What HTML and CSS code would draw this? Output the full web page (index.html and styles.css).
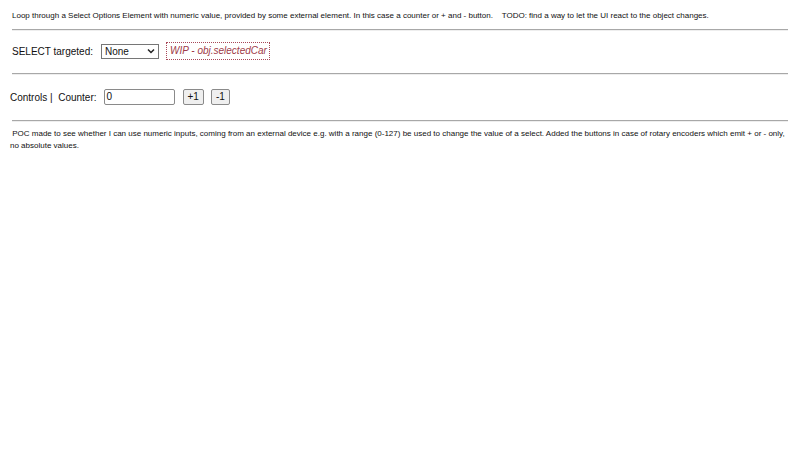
FILE: index.html
```html
<!DOCTYPE html>
<html>
<head>
<meta charset="utf-8">
<link rel="stylesheet" href="styles.css">
</head>
<body>
<div class="page">
  <p class="intro">Loop through a Select Options Element with numeric value, provided by some external element. In this case a counter or + and - button. &nbsp;&nbsp; TODO: find a way to let the UI react to the object changes.</p>
  <hr class="rule">
  <div class="row select-row">
    <span class="label">SELECT targeted:</span>
    <div class="select-box"><span class="select-val">None</span><svg class="chev" width="8" height="6" viewBox="0 0 8 6"><path d="M1 1.5 L4 4.5 L7 1.5" fill="none" stroke="#222" stroke-width="1.5"/></svg></div>
    <span class="wip">WIP - obj.selectedCar</span>
  </div>
  <hr class="rule">
  <div class="row controls-row">
    <span class="label">Controls | &nbsp;Counter:</span>
    <div class="num-input">0</div>
    <button class="btn">+1</button>
    <button class="btn">-1</button>
  </div>
  <hr class="rule">
  <p class="outro">&nbsp;POC made to see whether I can use numeric inputs, coming from an external device e.g. with a range (0-127) be used to change the value of a select. Added the buttons in case of rotary encoders which emit + or - only, no absolute values.</p>
</div>
</body>
</html>
```
FILE: styles.css
```css
html, body {
  margin: 0;
  padding: 0;
  background: #fff;
}
.page {
  padding: 0 12px 0 10px;
  font-family: "Liberation Sans", Arial, sans-serif;
  color: #111;
}
.intro {
  margin: 0;
  padding: 11px 0 8px 2px;
  font-size: 8px;
  line-height: 10px;
}
.rule {
  margin: 0 0 0 2px;
  border: 0;
  border-top: 1px solid #a8a8a8;
  border-bottom: 1px solid #eeeeee;
  height: 0;
}
.row {
  display: flex;
  align-items: center;
}
.select-row {
  padding: 11px 0 13px 2px;
  height: 18px;
}
.select-row .label {
  font-size: 10px;
  margin-right: 8px;
}
.select-box {
  height: 13px;
  border: 1px solid #767676;
  display: flex;
  align-items: center;
  justify-content: space-between;
  padding: 0 3px 0 3px;
  box-sizing: content-box;
  width: 50px;
  background: #fff;
}
.select-val {
  font-size: 10px;
}
.chev {
  display: block;
}
.wip {
  margin-left: 7px;
  border: 1px dotted #a84858;
  color: #a03a48;
  font-style: italic;
  font-size: 10px;
  padding: 3px 2px 3px 3px;
  line-height: 10px;
}
.controls-row {
  padding: 13px 0 14px 0;
  height: 18px;
}
.controls-row .label {
  font-size: 10px;
  margin-right: 7px;
}
.num-input {
  width: 65px;
  height: 14px;
  border: 1px solid #8a8a8a;
  border-radius: 2px;
  font-size: 10px;
  line-height: 14px;
  padding: 0 2px;
  background: #fff;
}
.btn {
  margin: 0 0 0 8px;
  height: 16px;
  padding: 0 4px;
  border: 1px solid #8a8a8a;
  border-radius: 2px;
  background: #efefef;
  font-family: "Liberation Sans", Arial, sans-serif;
  font-size: 10px;
  color: #111;
  line-height: 14px;
}
.btn + .btn {
  margin-left: 7px;
}
.outro {
  margin: 0;
  padding: 6px 0 0 0;
  font-size: 8px;
  line-height: 12px;
}
```
